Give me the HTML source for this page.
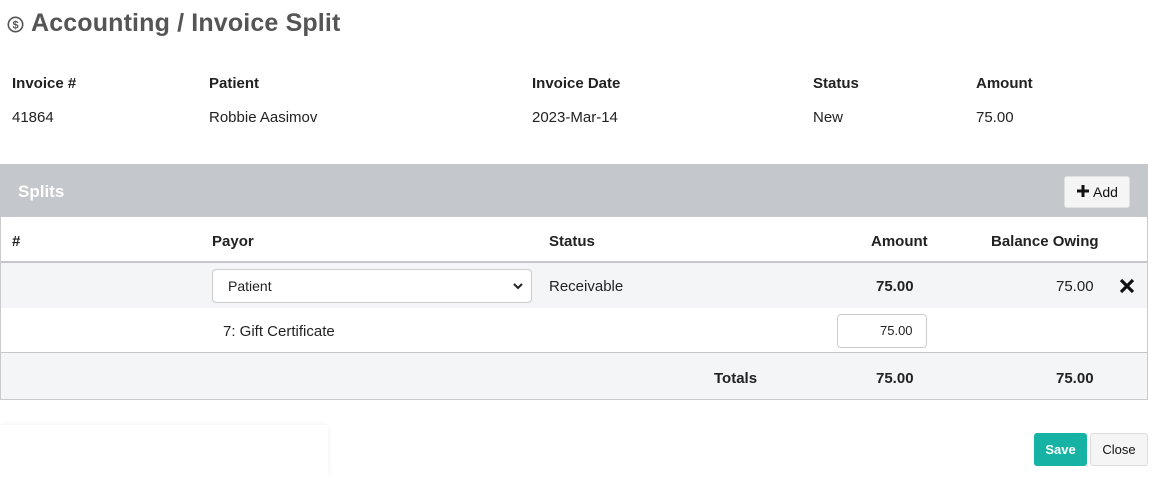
<!DOCTYPE html>
<html><head><style>
*{box-sizing:border-box;margin:0;padding:0}
body{width:1155px;height:477px;background:#fff;font-family:"Liberation Sans",sans-serif;font-size:15px;color:#222;position:relative;overflow:hidden}
.a{position:absolute;white-space:nowrap}
.b{font-weight:bold}
</style></head><body>
<svg class="a" style="left:7px;top:16px" width="17" height="17" viewBox="0 0 17 17"><circle cx="8.5" cy="8.5" r="7.2" fill="none" stroke="#555" stroke-width="1.6"/><text x="8.5" y="12.5" font-size="11" font-family="Liberation Sans" font-weight="bold" text-anchor="middle" fill="#555">$</text></svg>
<div class="a b" style="left:31px;top:9px;font-size:25px;color:#555;letter-spacing:0.15px">Accounting / Invoice Split</div>

<div class="a b" style="left:12px;top:75px">Invoice #</div>
<div class="a b" style="left:209px;top:75px">Patient</div>
<div class="a b" style="left:532px;top:75px">Invoice Date</div>
<div class="a b" style="left:813px;top:75px">Status</div>
<div class="a b" style="left:976px;top:75px">Amount</div>
<div class="a" style="left:12px;top:109px">41864</div>
<div class="a" style="left:209px;top:109px">Robbie Aasimov</div>
<div class="a" style="left:532px;top:109px">2023-Mar-14</div>
<div class="a" style="left:813px;top:109px">New</div>
<div class="a" style="left:976px;top:109px">75.00</div>

<div class="a" style="left:0;top:164px;width:1148px;height:236px;border:1px solid #c9cbce;border-top:0"></div>
<div class="a" style="left:0;top:164px;width:1148px;height:53px;background:#c4c7cb"></div>
<div class="a b" style="left:18px;top:182px;color:#fff;font-size:17px">Splits</div>
<div class="a" style="left:1064px;top:176px;width:66px;height:32px;background:#f5f5f5;border:1px solid #e0e0e0;border-radius:3px"></div>
<svg class="a" style="left:1076px;top:184px" width="14" height="14" viewBox="0 0 14 14"><path d="M7 1v12M1 7h12" stroke="#111" stroke-width="3"/></svg>
<div class="a" style="left:1093px;top:184px;font-size:14px;color:#111">Add</div>

<div class="a b" style="left:12px;top:233px">#</div>
<div class="a b" style="left:212px;top:233px">Payor</div>
<div class="a b" style="left:549px;top:233px">Status</div>
<div class="a b" style="left:871px;top:233px">Amount</div>
<div class="a b" style="left:991px;top:233px">Balance Owing</div>
<div class="a" style="left:1px;top:261px;width:1146px;height:2px;background:#c5c8cb"></div>
<div class="a" style="left:1px;top:263px;width:1146px;height:45px;background:#f4f5f7"></div>
<div class="a" style="left:212px;top:269px;width:320px;height:34px;background:#fff;border:1px solid #ccc;border-radius:4px"></div>
<div class="a" style="left:228px;top:278px;font-size:14px">Patient</div>
<svg class="a" style="left:512px;top:281px" width="12" height="10" viewBox="0 0 12 10"><path d="M2 3l4 4 4-4" fill="none" stroke="#222" stroke-width="2"/></svg>
<div class="a" style="left:549px;top:278px">Receivable</div>
<div class="a b" style="left:876px;top:278px">75.00</div>
<div class="a" style="left:1056px;top:278px">75.00</div>
<svg class="a" style="left:1119px;top:278px" width="16" height="16" viewBox="0 0 16 16"><path d="M2 2l12 12M14 2L2 14" stroke="#111" stroke-width="3.2"/></svg>
<div class="a" style="left:223px;top:323px">7: Gift Certificate</div>
<div class="a" style="left:837px;top:314px;width:90px;height:34px;border:1px solid #ccc;border-radius:4px;background:#fff"></div>
<div class="a" style="left:880px;top:323px;font-size:13px">75.00</div>
<div class="a" style="left:1px;top:352px;width:1146px;height:1px;background:#c5c8cb"></div>
<div class="a" style="left:1px;top:353px;width:1146px;height:46px;background:#f4f5f7"></div>
<div class="a b" style="left:714px;top:370px">Totals</div>
<div class="a b" style="left:876px;top:370px">75.00</div>
<div class="a b" style="left:1056px;top:370px">75.00</div>

<div class="a" style="left:0;top:425px;width:328px;height:52px;box-shadow:0 0 6px rgba(0,0,0,0.06)"></div>
<div class="a b" style="left:1034px;top:433px;width:53px;height:33px;background:#16b3a5;border-radius:3px;color:#fff;font-size:13px;text-align:center;line-height:33px">Save</div>
<div class="a" style="left:1090px;top:433px;width:58px;height:33px;background:#f5f5f5;border:1px solid #ddd;border-radius:3px;color:#111;font-size:13px;text-align:center;line-height:31px">Close</div>
</body></html>
